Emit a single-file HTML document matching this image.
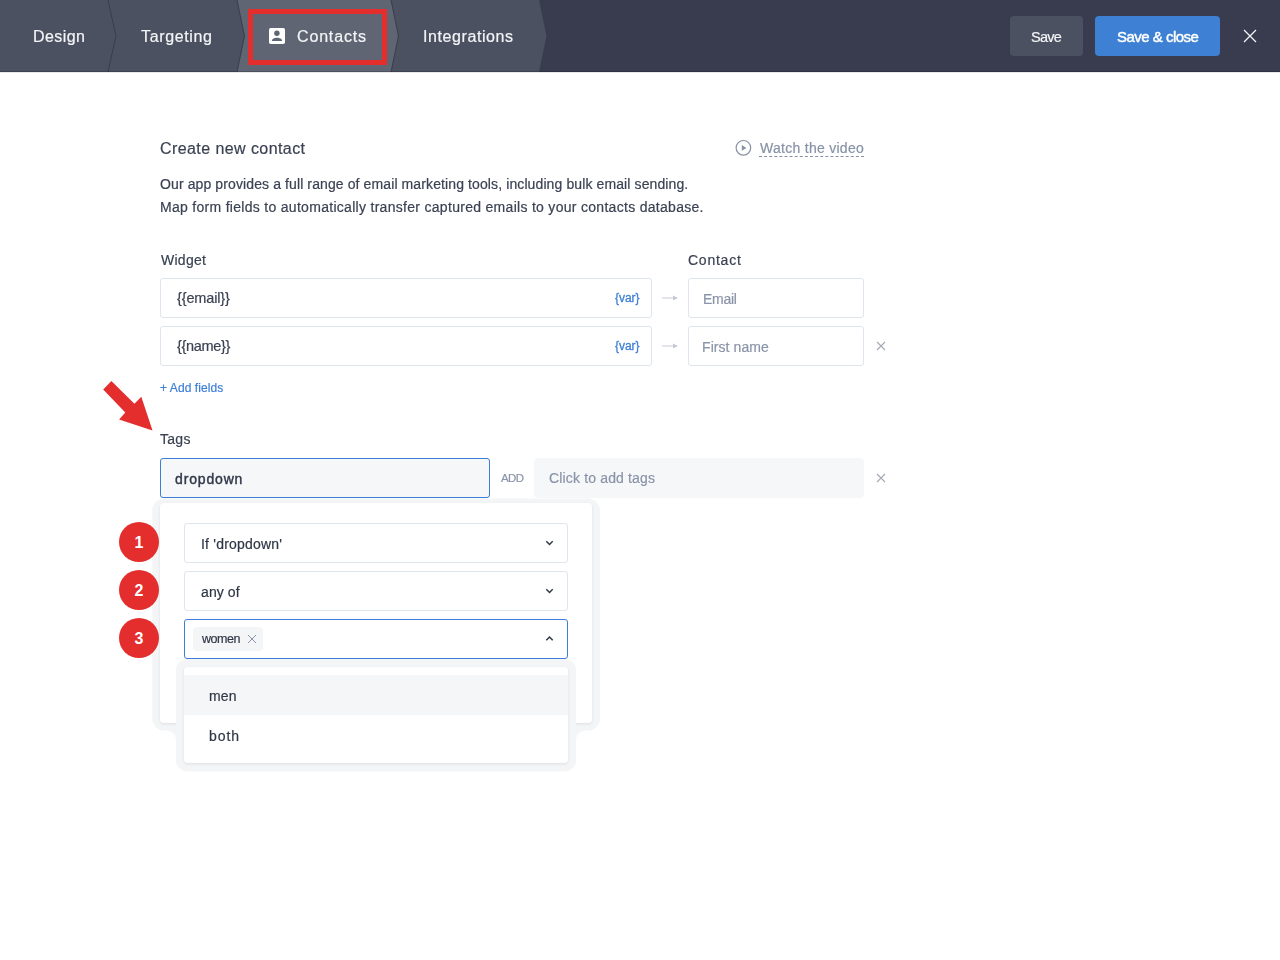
<!DOCTYPE html>
<html><head><meta charset="utf-8"><style>
html,body{margin:0;padding:0;width:1280px;height:960px;overflow:hidden;background:#fff;font-family:"Liberation Sans",sans-serif;}
.t{position:absolute;white-space:pre;will-change:transform;}
.a{position:absolute;box-sizing:border-box;}
</style></head><body>
<div class="a" style="left:0;top:72px;width:1280px;height:1px;background:rgba(20,25,40,0.10)"></div>
<svg class="a" style="left:0;top:0" width="1280" height="72" viewBox="0 0 1280 72">
  <rect x="0" y="0" width="1280" height="72" fill="#383c4e"/>
  <polygon points="0,0 108,0 116,36 108,72 0,72" fill="#4b5161"/>
  <polygon points="108,0 237,0 244.5,36 237,72 108,72 116,36" fill="#4b5161"/>
  <polygon points="237,0 391,0 398.5,36 391,72 237,72 244.5,36" fill="#5f6573"/>
  <polygon points="391,0 539,0 546.5,36 539,72 391,72 398.5,36" fill="#4b5161"/>
  <polyline points="108,0 116,36 108,72" fill="none" stroke="#3a3f4e" stroke-width="1"/>
  <polyline points="237,0 244.5,36 237,72" fill="none" stroke="#3a3f4e" stroke-width="1"/>
  <polyline points="391,0 398.5,36 391,72" fill="none" stroke="#3a3f4e" stroke-width="1"/>
  <rect x="0" y="71" width="1280" height="1" fill="rgba(10,14,30,0.22)"/>
  <!-- contact icon -->
  <rect x="269" y="28" width="16" height="16" rx="1.8" fill="#ffffff"/>
  <circle cx="276.9" cy="33.3" r="2.7" fill="#5f6573"/>
  <path d="M271.9 41 C271.9 38.6 274.3 37.7 276.9 37.7 C279.5 37.7 282.1 38.6 282.1 41 Z" fill="#5f6573"/>
  <!-- red box -->
  <rect x="250.5" y="11.5" width="134" height="51" fill="none" stroke="#e42d2d" stroke-width="5"/>
  <!-- buttons -->
  <rect x="1010" y="16" width="73" height="40" rx="4" fill="#4b5161"/>
  <rect x="1095" y="16" width="125" height="40" rx="4" fill="#3d80d4"/>
  <path d="M1244 30 L1256 42 M1256 30 L1244 42" stroke="#f4f5f7" stroke-width="1.25"/>
</svg>

<!-- watch video icon -->
<svg class="a" style="left:734px;top:139px" width="18" height="18" viewBox="0 0 18 18">
  <circle cx="9.4" cy="8.8" r="7.3" fill="none" stroke="#8792a6" stroke-width="1.2"/>
  <path d="M7.8 6.1 L12.4 8.9 L7.8 11.7 Z" fill="#8792a6"/>
</svg>
<div class="a" style="left:759px;top:156px;width:105px;height:0;border-top:1px dashed #8792a6"></div>

<!-- widget rows -->
<div class="a" style="left:160px;top:278px;width:492px;height:40px;border:1px solid #dfe5ee;border-radius:3px"></div>
<div class="a" style="left:160px;top:326px;width:492px;height:40px;border:1px solid #dfe5ee;border-radius:3px"></div>
<div class="a" style="left:688px;top:278px;width:176px;height:40px;border:1px solid #dfe5ee;border-radius:3px"></div>
<div class="a" style="left:688px;top:326px;width:176px;height:40px;border:1px solid #dfe5ee;border-radius:3px"></div>
<svg class="a" style="left:660px;top:290px" width="20" height="64" viewBox="0 0 20 64">
  <path d="M2 8 H14" stroke="#d3d7de" stroke-width="1.3"/><path d="M13 5.5 L18 8 L13 10.5 Z" fill="#c4c9d2"/>
  <path d="M2 56 H14" stroke="#d3d7de" stroke-width="1.3"/><path d="M13 53.5 L18 56 L13 58.5 Z" fill="#c4c9d2"/>
</svg>
<svg class="a" style="left:870px;top:335px" width="22" height="154" viewBox="0 0 22 154">
  <path d="M7 7 L15 15 M15 7 L7 15" stroke="#a3aab6" stroke-width="1.1"/>
  <path d="M7 139 L15 147 M15 139 L7 147" stroke="#a3aab6" stroke-width="1.1"/>
</svg>

<!-- tags row -->
<div class="a" style="left:160px;top:458px;width:330px;height:40px;border:1px solid #3b7dd8;border-radius:3px;background:#f6f7f9"></div>
<div class="a" style="left:534px;top:458px;width:330px;height:40px;border-radius:4px;background:#f6f7f9"></div>

<!-- red arrow -->
<svg class="a" style="left:0;top:370px" width="200" height="80" viewBox="0 370 200 80">
  <polygon points="103.2,389.5 111.4,381.1 134.4,403.7 141.3,396.8 152.5,430.6 119.1,419.6 125.3,412.6" fill="#e42d2d"/>
</svg>

<!-- panel -->
<svg class="a" style="left:0;top:0" width="700" height="800" viewBox="0 0 700 800">
  <path d="M152.2 510.5 A12 12 0 0 1 164.2 498.5 L588 498.5 A12 12 0 0 1 600 510.5 L600 718.5 A12 12 0 0 1 588 730.5 L585 730.5 A9 9 0 0 0 576 739.5 L576 759.5 A12 12 0 0 1 564 771.5 L188 771.5 A12 12 0 0 1 176 759.5 L176 739.5 A9 9 0 0 0 167 730.5 L164.2 730.5 A12 12 0 0 1 152.2 718.5 Z" fill="#f4f5f6"/>
</svg>
<div class="a" style="left:160px;top:502.5px;width:432px;height:220.5px;background:#fff;border-radius:4px;box-shadow:0 1px 3px rgba(20,30,50,0.10)"></div>
<div class="a" style="left:184px;top:523px;width:384px;height:40px;border:1px solid #dfe5ee;border-radius:3px"></div>
<div class="a" style="left:184px;top:571px;width:384px;height:40px;border:1px solid #dfe5ee;border-radius:3px"></div>
<div class="a" style="left:184px;top:619px;width:384px;height:40px;border:1px solid #3b7dd8;border-radius:3px"></div>
<div class="a" style="left:193px;top:627px;width:70px;height:24px;border-radius:4px;background:#f4f5f7"></div>
<svg class="a" style="left:540px;top:530px" width="20" height="120" viewBox="0 0 20 120">
  <path d="M6.3 11.3 L9.5 14.5 L12.7 11.3" fill="none" stroke="#2f3747" stroke-width="1.5"/>
  <path d="M6.3 59.3 L9.5 62.5 L12.7 59.3" fill="none" stroke="#2f3747" stroke-width="1.5"/>
  <path d="M6.3 110.2 L9.5 107 L12.7 110.2" fill="none" stroke="#2f3747" stroke-width="1.5"/>
</svg>
<svg class="a" style="left:246px;top:633px" width="12" height="12" viewBox="0 0 12 12">
  <path d="M2 2 L10 10 M10 2 L2 10" stroke="#8a94a8" stroke-width="1"/>
</svg>

<!-- dropdown list -->
<div class="a" style="left:184px;top:666.5px;width:384px;height:96.5px;background:#fff;border-radius:4px;box-shadow:0 1px 3px rgba(20,30,50,0.10), 0 0 0 8px #f4f5f6"></div>
<div class="a" style="left:184px;top:675px;width:384px;height:40px;background:#f5f6f8"></div>

<!-- badges -->
<svg class="a" style="left:118px;top:521px" width="42" height="140" viewBox="118 521 42 140">
  <circle cx="139" cy="542" r="20" fill="#e42d2d"/>
  <circle cx="139" cy="590" r="20" fill="#e42d2d"/>
  <circle cx="139" cy="638" r="20" fill="#e42d2d"/>
  <text x="139" y="548" text-anchor="middle" font-family="Liberation Sans" font-weight="700" font-size="16" fill="#fff">1</text>
  <text x="139" y="596" text-anchor="middle" font-family="Liberation Sans" font-weight="700" font-size="16" fill="#fff">2</text>
  <text x="139" y="644" text-anchor="middle" font-family="Liberation Sans" font-weight="700" font-size="16" fill="#fff">3</text>
</svg>

<div class="t" style="left:32.75px;top:29.46px;font-size:16px;line-height:16px;font-weight:400;color:#f4f5f7;letter-spacing:0.419px;-webkit-text-stroke:0.2px #f4f5f7">Design</div>
<div class="t" style="left:141.25px;top:29.46px;font-size:16px;line-height:16px;font-weight:400;color:#f4f5f7;letter-spacing:0.635px;-webkit-text-stroke:0.2px #f4f5f7">Targeting</div>
<div class="t" style="left:297.00px;top:29.46px;font-size:16px;line-height:16px;font-weight:400;color:#f4f5f7;letter-spacing:0.837px;-webkit-text-stroke:0.2px #f4f5f7">Contacts</div>
<div class="t" style="left:422.80px;top:29.46px;font-size:16px;line-height:16px;font-weight:400;color:#f4f5f7;letter-spacing:0.581px;-webkit-text-stroke:0.2px #f4f5f7">Integrations</div>
<div class="t" style="left:1031.00px;top:29.73px;font-size:14.5px;line-height:14.5px;font-weight:400;color:#f4f5f7;letter-spacing:-0.729px;-webkit-text-stroke:0.2px #f4f5f7">Save</div>
<div class="t" style="left:1116.50px;top:29.30px;font-size:15px;line-height:15px;font-weight:400;color:#ffffff;letter-spacing:-0.509px;-webkit-text-stroke:0.45px #fff">Save &amp; close</div>
<div class="t" style="left:160.00px;top:141.46px;font-size:16px;line-height:16px;font-weight:400;color:#3a4253;letter-spacing:0.423px;-webkit-text-stroke:0.2px #3a4253">Create new contact</div>
<div class="t" style="left:759.75px;top:140.65px;font-size:14px;line-height:14px;font-weight:400;color:#8792a6;letter-spacing:0.280px;-webkit-text-stroke:0.2px #8792a6">Watch the video</div>
<div class="t" style="left:160.00px;top:177.25px;font-size:14px;line-height:14px;font-weight:400;color:#3a4253;letter-spacing:0.109px;-webkit-text-stroke:0.2px #3a4253">Our app provides a full range of email marketing tools, including bulk email sending.</div>
<div class="t" style="left:159.50px;top:199.75px;font-size:14px;line-height:14px;font-weight:400;color:#3a4253;letter-spacing:0.295px;-webkit-text-stroke:0.2px #3a4253">Map form fields to automatically transfer captured emails to your contacts database.</div>
<div class="t" style="left:160.60px;top:252.90px;font-size:14px;line-height:14px;font-weight:400;color:#3a4253;letter-spacing:0.263px;-webkit-text-stroke:0.2px #3a4253">Widget</div>
<div class="t" style="left:688.00px;top:252.85px;font-size:14px;line-height:14px;font-weight:400;color:#3a4253;letter-spacing:0.757px;-webkit-text-stroke:0.2px #3a4253">Contact</div>
<div class="t" style="left:176.90px;top:290.83px;font-size:14.5px;line-height:14.5px;font-weight:400;color:#3a4253;letter-spacing:-0.147px;-webkit-text-stroke:0.2px #3a4253">{{email}}</div>
<div class="t" style="left:176.90px;top:338.83px;font-size:14.5px;line-height:14.5px;font-weight:400;color:#3a4253;letter-spacing:-0.329px;-webkit-text-stroke:0.2px #3a4253">{{name}}</div>
<div class="t" style="left:614.75px;top:291.64px;font-size:12px;line-height:12px;font-weight:400;color:#3d7fd6;letter-spacing:-0.019px;-webkit-text-stroke:0.3px #3d7fd6">{var}</div>
<div class="t" style="left:614.75px;top:339.64px;font-size:12px;line-height:12px;font-weight:400;color:#3d7fd6;letter-spacing:-0.019px;-webkit-text-stroke:0.3px #3d7fd6">{var}</div>
<div class="t" style="left:702.50px;top:291.55px;font-size:14px;line-height:14px;font-weight:400;color:#8a94a8;letter-spacing:-0.287px;-webkit-text-stroke:0.2px #8a94a8">Email</div>
<div class="t" style="left:702.40px;top:339.55px;font-size:14px;line-height:14px;font-weight:400;color:#8a94a8;letter-spacing:0.074px;-webkit-text-stroke:0.2px #8a94a8">First name</div>
<div class="t" style="left:160.20px;top:382.34px;font-size:12px;line-height:12px;font-weight:400;color:#3d7fd6;letter-spacing:0.069px;-webkit-text-stroke:0.2px #3d7fd6">+ Add fields</div>
<div class="t" style="left:160.20px;top:432.45px;font-size:14px;line-height:14px;font-weight:400;color:#3a4253;letter-spacing:0.276px;-webkit-text-stroke:0.2px #3a4253">Tags</div>
<div class="t" style="left:175.30px;top:471.75px;font-size:14px;line-height:14px;font-weight:400;color:#2f3747;letter-spacing:0.842px;-webkit-text-stroke:0.4px #2f3747">dropdown</div>
<div class="t" style="left:500.50px;top:473.27px;font-size:11.5px;line-height:11.5px;font-weight:400;color:#8a94a8;letter-spacing:-0.588px;-webkit-text-stroke:0.2px #8a94a8">ADD</div>
<div class="t" style="left:549.00px;top:471.35px;font-size:14px;line-height:14px;font-weight:400;color:#8a94a8;letter-spacing:0.156px;-webkit-text-stroke:0.2px #8a94a8">Click to add tags</div>
<div class="t" style="left:200.70px;top:536.75px;font-size:14px;line-height:14px;font-weight:400;color:#2f3747;letter-spacing:0.206px;-webkit-text-stroke:0.2px #2f3747">If &#x27;dropdown&#x27;</div>
<div class="t" style="left:201.30px;top:584.75px;font-size:14px;line-height:14px;font-weight:400;color:#2f3747;letter-spacing:0.090px;-webkit-text-stroke:0.2px #2f3747">any of</div>
<div class="t" style="left:202.40px;top:632.72px;font-size:12.5px;line-height:12.5px;font-weight:400;color:#2f3747;letter-spacing:-0.461px;-webkit-text-stroke:0.2px #2f3747">women</div>
<div class="t" style="left:208.70px;top:688.95px;font-size:14px;line-height:14px;font-weight:400;color:#2f3747;letter-spacing:0.176px;-webkit-text-stroke:0.2px #2f3747">men</div>
<div class="t" style="left:208.70px;top:728.65px;font-size:14px;line-height:14px;font-weight:400;color:#2f3747;letter-spacing:0.946px;-webkit-text-stroke:0.2px #2f3747">both</div>
</body></html>
